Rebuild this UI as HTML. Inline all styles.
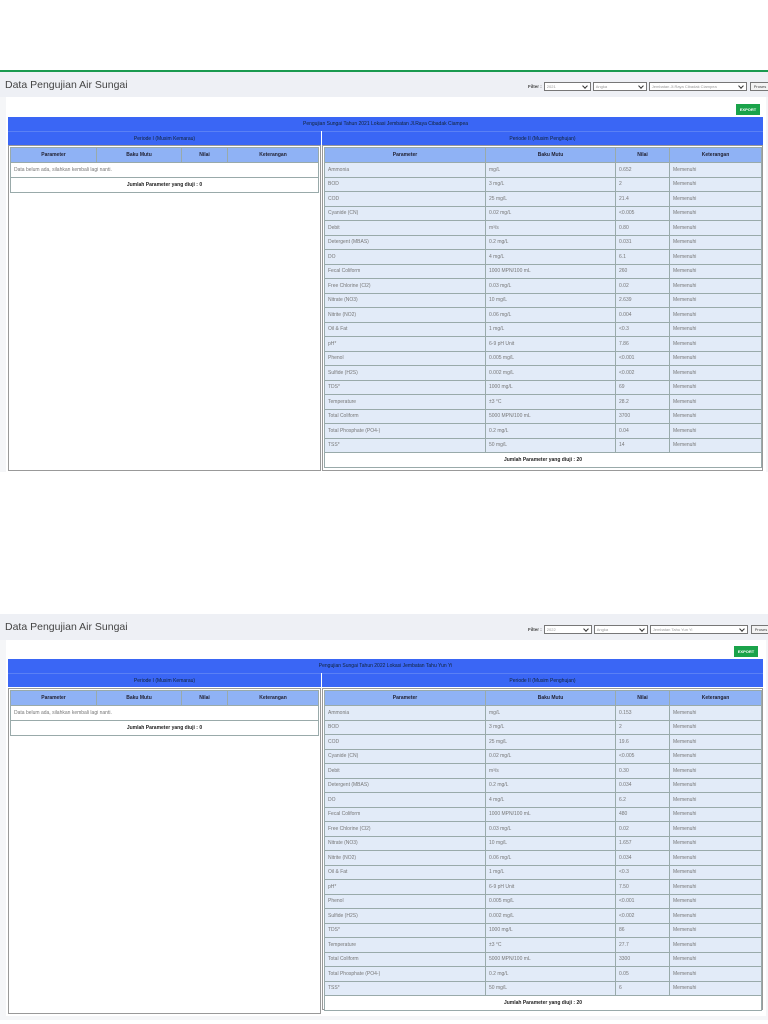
<!DOCTYPE html>
<html><head><meta charset="utf-8"><style>
*{margin:0;padding:0;box-sizing:border-box}
body{width:768px;height:1024px;background:#fff;font-family:"Liberation Sans",sans-serif;position:relative;overflow:hidden}
.bar{position:absolute;left:0;width:768px;height:26px;background:#eef0f5}
.title{position:absolute;left:5px;top:7px;font-size:10.5px;color:#444}
.filt{position:absolute;top:8px;height:10px;font-size:4.5px;color:#444;display:flex;align-items:center;white-space:nowrap}
.filt b{white-space:nowrap}
.sel{border:1px solid #777;background:#fff;height:9px;margin-left:2px;position:relative;font-size:4px;color:#999;padding-left:2px;line-height:8px;white-space:nowrap;overflow:hidden}
.sel:after{content:"";position:absolute;right:3px;top:1px;width:3px;height:3px;border-right:1.5px solid #333;border-bottom:1.5px solid #333;transform:rotate(45deg)}
.btn{border:1px solid #777;background:#f3f3f3;height:9px;margin-left:3px;font-size:4px;padding:0 3px;line-height:8px}
.bg{position:absolute;left:0;width:768px;background:#f5f6f8}
.white{position:absolute;left:6px;right:2px;background:#fff}
.exp{position:absolute;width:24px;height:11px;background:#1aa34a;color:#fff;font-size:4px;font-weight:bold;text-align:center;line-height:11px}
.blue{position:absolute;left:8px;width:755px;height:14px;background:#3a66f5;color:#123;font-size:5px;text-align:center;line-height:14px}
.per{position:absolute;height:14px;background:#3a66f5;color:#123;font-size:5px;text-align:center;line-height:14px;border-top:1px solid #5a80f5}
.box{position:absolute;border:1px solid #999;background:#fff}
table{position:absolute;border-collapse:collapse;table-layout:fixed;font-size:5px;color:#777}
td,th{border:1px solid #9aa;height:14.5px;padding:0 3px;white-space:nowrap;overflow:hidden}
th{background:#8fb2f5;color:#223;font-weight:bold;text-align:center;height:15px}
.r td{background:#e2ebf8}
.j td{background:#fff;color:#222;font-weight:bold;text-align:center;height:15px}
.e td{background:#fff}
</style></head><body>

<div style="position:absolute;left:0;top:70px;width:768px;height:2px;background:#1a9a50"></div>
<div class="bar" style="top:72px"><div class="title">Data Pengujian Air Sungai</div>
<div class="filt" style="left:528px;top:9px"><b>Filter :</b><div class="sel" style="width:47px">2021</div><div class="sel" style="width:54px">Angka</div><div class="sel" style="width:98px">Jembatan Jl.Raya Cibadak Ciampea</div><div class="btn">Proses</div></div></div>
<div class="bg" style="top:97px;height:375px"></div>
<div class="white" style="top:97px;height:375px"></div>
<div class="exp" style="left:736px;top:104px">EXPORT</div>
<div class="blue" style="top:117px">Pengujian Sungai Tahun 2021 Lokasi Jembatan Jl.Raya Cibadak Ciampea</div>
<div class="per" style="left:8px;width:313px;top:131px">Periode I (Musim Kemarau)</div>
<div class="per" style="left:322px;width:441px;top:131px">Periode II (Musim Penghujan)</div>
<div class="box" style="left:8px;top:145px;width:313px;height:326px"></div>
<div class="box" style="left:322px;top:145px;width:441px;height:326px"></div>
<table style="left:10px;top:147px;width:308px">
<colgroup><col style="width:86px"><col style="width:85px"><col style="width:46px"><col style="width:91px"></colgroup>
<tr><th>Parameter</th><th>Baku Mutu</th><th>Nilai</th><th>Keterangan</th></tr>
<tr class="e"><td colspan="4">Data belum ada, silahkan kembali lagi nanti.</td></tr>
<tr class="j"><td colspan="4">Jumlah Parameter yang diuji : 0</td></tr>
</table>
<table style="left:324px;top:147px;width:437px">
<colgroup><col style="width:161px"><col style="width:130px"><col style="width:54px"><col style="width:92px"></colgroup>
<tr><th>Parameter</th><th>Baku Mutu</th><th>Nilai</th><th>Keterangan</th></tr>
<tr class="r"><td>Ammonia</td><td>mg/L</td><td>0.652</td><td>Memenuhi</td></tr>
<tr class="r"><td>BOD</td><td>3 mg/L</td><td>2</td><td>Memenuhi</td></tr>
<tr class="r"><td>COD</td><td>25 mg/L</td><td>21.4</td><td>Memenuhi</td></tr>
<tr class="r"><td>Cyanide (CN)</td><td>0.02 mg/L</td><td>&lt;0.005</td><td>Memenuhi</td></tr>
<tr class="r"><td>Debit</td><td>m³/s</td><td>0.80</td><td>Memenuhi</td></tr>
<tr class="r"><td>Detergent (MBAS)</td><td>0.2 mg/L</td><td>0.031</td><td>Memenuhi</td></tr>
<tr class="r"><td>DO</td><td>4 mg/L</td><td>6.1</td><td>Memenuhi</td></tr>
<tr class="r"><td>Fecal Coliform</td><td>1000 MPN/100 mL</td><td>260</td><td>Memenuhi</td></tr>
<tr class="r"><td>Free Chlorine (Cl2)</td><td>0.03 mg/L</td><td>0.02</td><td>Memenuhi</td></tr>
<tr class="r"><td>Nitrate (NO3)</td><td>10 mg/L</td><td>2.639</td><td>Memenuhi</td></tr>
<tr class="r"><td>Nitrite (NO2)</td><td>0.06 mg/L</td><td>0.004</td><td>Memenuhi</td></tr>
<tr class="r"><td>Oil &amp; Fat</td><td>1 mg/L</td><td>&lt;0.3</td><td>Memenuhi</td></tr>
<tr class="r"><td>pH*</td><td>6-9 pH Unit</td><td>7.86</td><td>Memenuhi</td></tr>
<tr class="r"><td>Phenol</td><td>0.005 mg/L</td><td>&lt;0.001</td><td>Memenuhi</td></tr>
<tr class="r"><td>Sulfide (H2S)</td><td>0.002 mg/L</td><td>&lt;0.002</td><td>Memenuhi</td></tr>
<tr class="r"><td>TDS*</td><td>1000 mg/L</td><td>69</td><td>Memenuhi</td></tr>
<tr class="r"><td>Temperature</td><td>±3 °C</td><td>28.2</td><td>Memenuhi</td></tr>
<tr class="r"><td>Total Coliform</td><td>5000 MPN/100 mL</td><td>3700</td><td>Memenuhi</td></tr>
<tr class="r"><td>Total Phosphate (PO4-)</td><td>0.2 mg/L</td><td>0.04</td><td>Memenuhi</td></tr>
<tr class="r"><td>TSS*</td><td>50 mg/L</td><td>14</td><td>Memenuhi</td></tr>
<tr class="j"><td colspan="4">Jumlah Parameter yang diuji : 20</td></tr>
</table>

<div class="bar" style="top:614px"><div class="title">Data Pengujian Air Sungai</div>
<div class="filt" style="left:528px;top:10px"><b>Filter :</b><div class="sel" style="width:48px">2022</div><div class="sel" style="width:54px">Angka</div><div class="sel" style="width:98px">Jembatan Tahu Yun Yi</div><div class="btn">Proses</div></div></div>
<div class="bg" style="top:640px;height:380px"></div>
<div class="white" style="top:640px;height:376px"></div>
<div class="exp" style="left:734px;top:646px">EXPORT</div>
<div class="blue" style="top:659px">Pengujian Sungai Tahun 2022 Lokasi Jembatan Tahu Yun Yi</div>
<div class="per" style="left:8px;width:313px;top:673px">Periode I (Musim Kemarau)</div>
<div class="per" style="left:322px;width:441px;top:673px">Periode II (Musim Penghujan)</div>
<div class="box" style="left:8px;top:688px;width:313px;height:326px"></div>
<div class="box" style="left:322px;top:688px;width:441px;height:322px"></div>
<table style="left:10px;top:690px;width:308px">
<colgroup><col style="width:86px"><col style="width:85px"><col style="width:46px"><col style="width:91px"></colgroup>
<tr><th>Parameter</th><th>Baku Mutu</th><th>Nilai</th><th>Keterangan</th></tr>
<tr class="e"><td colspan="4">Data belum ada, silahkan kembali lagi nanti.</td></tr>
<tr class="j"><td colspan="4">Jumlah Parameter yang diuji : 0</td></tr>
</table>
<table style="left:324px;top:690px;width:437px">
<colgroup><col style="width:161px"><col style="width:130px"><col style="width:54px"><col style="width:92px"></colgroup>
<tr><th>Parameter</th><th>Baku Mutu</th><th>Nilai</th><th>Keterangan</th></tr>
<tr class="r"><td>Ammonia</td><td>mg/L</td><td>0.153</td><td>Memenuhi</td></tr>
<tr class="r"><td>BOD</td><td>3 mg/L</td><td>2</td><td>Memenuhi</td></tr>
<tr class="r"><td>COD</td><td>25 mg/L</td><td>19.6</td><td>Memenuhi</td></tr>
<tr class="r"><td>Cyanide (CN)</td><td>0.02 mg/L</td><td>&lt;0.005</td><td>Memenuhi</td></tr>
<tr class="r"><td>Debit</td><td>m³/s</td><td>0.30</td><td>Memenuhi</td></tr>
<tr class="r"><td>Detergent (MBAS)</td><td>0.2 mg/L</td><td>0.034</td><td>Memenuhi</td></tr>
<tr class="r"><td>DO</td><td>4 mg/L</td><td>6.2</td><td>Memenuhi</td></tr>
<tr class="r"><td>Fecal Coliform</td><td>1000 MPN/100 mL</td><td>480</td><td>Memenuhi</td></tr>
<tr class="r"><td>Free Chlorine (Cl2)</td><td>0.03 mg/L</td><td>0.02</td><td>Memenuhi</td></tr>
<tr class="r"><td>Nitrate (NO3)</td><td>10 mg/L</td><td>1.657</td><td>Memenuhi</td></tr>
<tr class="r"><td>Nitrite (NO2)</td><td>0.06 mg/L</td><td>0.034</td><td>Memenuhi</td></tr>
<tr class="r"><td>Oil &amp; Fat</td><td>1 mg/L</td><td>&lt;0.3</td><td>Memenuhi</td></tr>
<tr class="r"><td>pH*</td><td>6-9 pH Unit</td><td>7.50</td><td>Memenuhi</td></tr>
<tr class="r"><td>Phenol</td><td>0.005 mg/L</td><td>&lt;0.001</td><td>Memenuhi</td></tr>
<tr class="r"><td>Sulfide (H2S)</td><td>0.002 mg/L</td><td>&lt;0.002</td><td>Memenuhi</td></tr>
<tr class="r"><td>TDS*</td><td>1000 mg/L</td><td>86</td><td>Memenuhi</td></tr>
<tr class="r"><td>Temperature</td><td>±3 °C</td><td>27.7</td><td>Memenuhi</td></tr>
<tr class="r"><td>Total Coliform</td><td>5000 MPN/100 mL</td><td>3300</td><td>Memenuhi</td></tr>
<tr class="r"><td>Total Phosphate (PO4-)</td><td>0.2 mg/L</td><td>0.05</td><td>Memenuhi</td></tr>
<tr class="r"><td>TSS*</td><td>50 mg/L</td><td>6</td><td>Memenuhi</td></tr>
<tr class="j"><td colspan="4">Jumlah Parameter yang diuji : 20</td></tr>
</table>
</body></html>
